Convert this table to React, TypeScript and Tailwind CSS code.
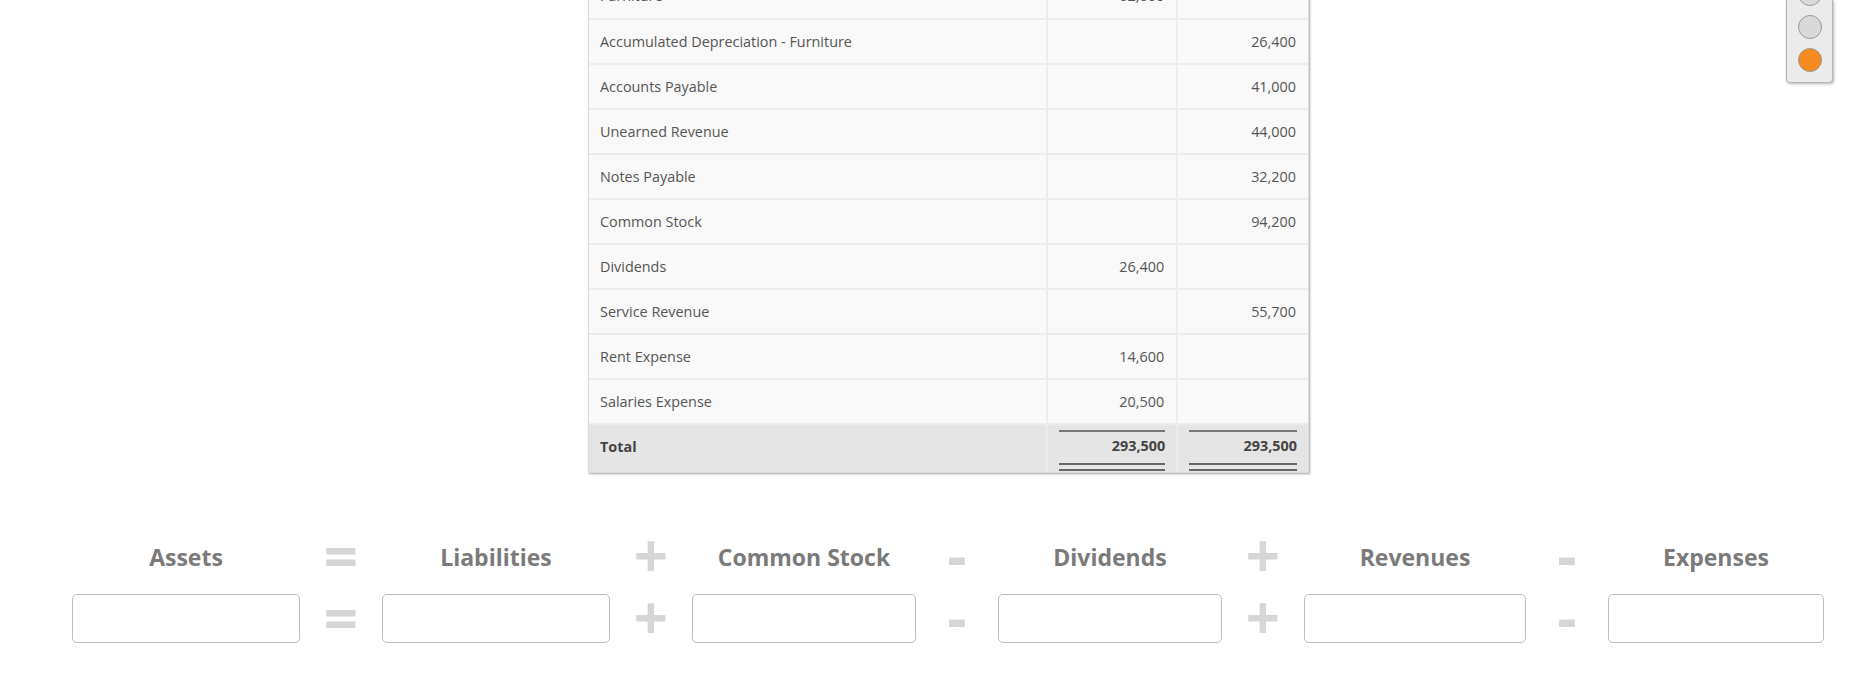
const rows: { label: string; debit?: string; credit?: string }[] = [
  { label: "Furniture", debit: "62,000" },
  { label: "Accumulated Depreciation - Furniture", credit: "26,400" },
  { label: "Accounts Payable", credit: "41,000" },
  { label: "Unearned Revenue", credit: "44,000" },
  { label: "Notes Payable", credit: "32,200" },
  { label: "Common Stock", credit: "94,200" },
  { label: "Dividends", debit: "26,400" },
  { label: "Service Revenue", credit: "55,700" },
  { label: "Rent Expense", debit: "14,600" },
  { label: "Salaries Expense", debit: "20,500" },
];

const terms = ["Assets", "Liabilities", "Common Stock", "Dividends", "Revenues", "Expenses"];
const ops = ["=", "+", "-", "+", "-"];

function TotalCell({ value }: { value: string }) {
  return (
    <td className="border-l-2 border-[#ececec] p-0 align-top">
      <div className="flex h-[47px] flex-col px-[11px] pt-[5px]">
        <div className="h-[1.5px] bg-[#777]" />
        <div className="flex flex-1 items-center justify-end pb-[2px] font-bold text-[#444]">{value}</div>
        <div className="h-[2.5px] bg-[#666]" />
        <div className="mt-[3.5px] mb-[1px] h-[2.5px] bg-[#666]" />
      </div>
    </td>
  );
}

function Operator({ sign }: { sign: string }) {
  return (
    <div className="flex h-full items-center justify-center text-[60px] leading-[36px] font-bold text-[#d6d6d6]">
      <span className="-translate-y-[2px]">{sign}</span>
    </div>
  );
}

export default function App() {
  return (
    <div className="relative h-[694px] overflow-hidden bg-white font-['Open_Sans',sans-serif] text-[14.4px] text-[#555]">
      {/* trial balance, scrolled so the first row is cut */}
      <div className="ml-[588px] mt-[-27px] w-[721px] border border-[#dcdcdc] shadow-[1px_1px_2px_rgba(0,0,0,0.35)]">
        <table className="w-full border-collapse">
          <colgroup>
            <col className="w-[460px]" />
            <col className="w-[130px]" />
            <col className="w-[131px]" />
          </colgroup>
          <tbody>
            {rows.map((r) => (
              <tr key={r.label} className="h-[45px] border-b-2 border-[#ececec] bg-[#f9f9f9]">
                <td className="pl-[11px]">{r.label}</td>
                <td className="border-l-2 border-[#ececec] pr-[12px] text-right">{r.debit}</td>
                <td className="border-l-2 border-[#ececec] pr-[12px] text-right">{r.credit}</td>
              </tr>
            ))}
            <tr className="bg-[#e5e5e5]">
              <td className="pb-[3px] pl-[11px] font-bold text-[#444]">Total</td>
              <TotalCell value="293,500" />
              <TotalCell value="293,500" />
            </tr>
          </tbody>
        </table>
      </div>

      {/* accounting equation */}
      <div className="mt-[64px] pl-[72px]">
        <div className="grid grid-cols-[228px_82px_228px_82px_224px_82px_224px_82px_222px_82px_216px] grid-rows-[40px_49px] gap-y-[17px]">
          {terms.map((t, i) => (
            <div key={t} className="contents">
              <div className="flex items-center justify-center text-[23px] font-bold text-[#7a7a7a]">{t}</div>
              {i < ops.length && <Operator sign={ops[i]} />}
            </div>
          ))}
          {terms.map((t, i) => (
            <div key={t + "-input"} className="contents">
              <input
                aria-label={t}
                className="h-[49px] w-full rounded-[5px] border-[1.5px] border-[#bdbdbd] bg-white"
              />
              {i < ops.length && <Operator sign={ops[i]} />}
            </div>
          ))}
        </div>
      </div>

      {/* step indicator */}
      <div className="absolute top-0 right-[21px] flex h-[83px] w-[47px] flex-col items-center gap-[9px] overflow-hidden rounded-b-[4px] border border-t-0 border-[#b5b5b5] bg-[#ebebeb] shadow-[1px_1px_3px_rgba(0,0,0,0.3)]">
        <div className="mt-[-18px] h-[24px] w-[24px] shrink-0 rounded-full border border-[#999] bg-[#d9d9d9]" />
        <div className="h-[24px] w-[24px] shrink-0 rounded-full border border-[#999] bg-[#d9d9d9]" />
        <div className="h-[24px] w-[24px] shrink-0 rounded-full border border-[#999] bg-[#f58a1f]" />
      </div>
    </div>
  );
}
